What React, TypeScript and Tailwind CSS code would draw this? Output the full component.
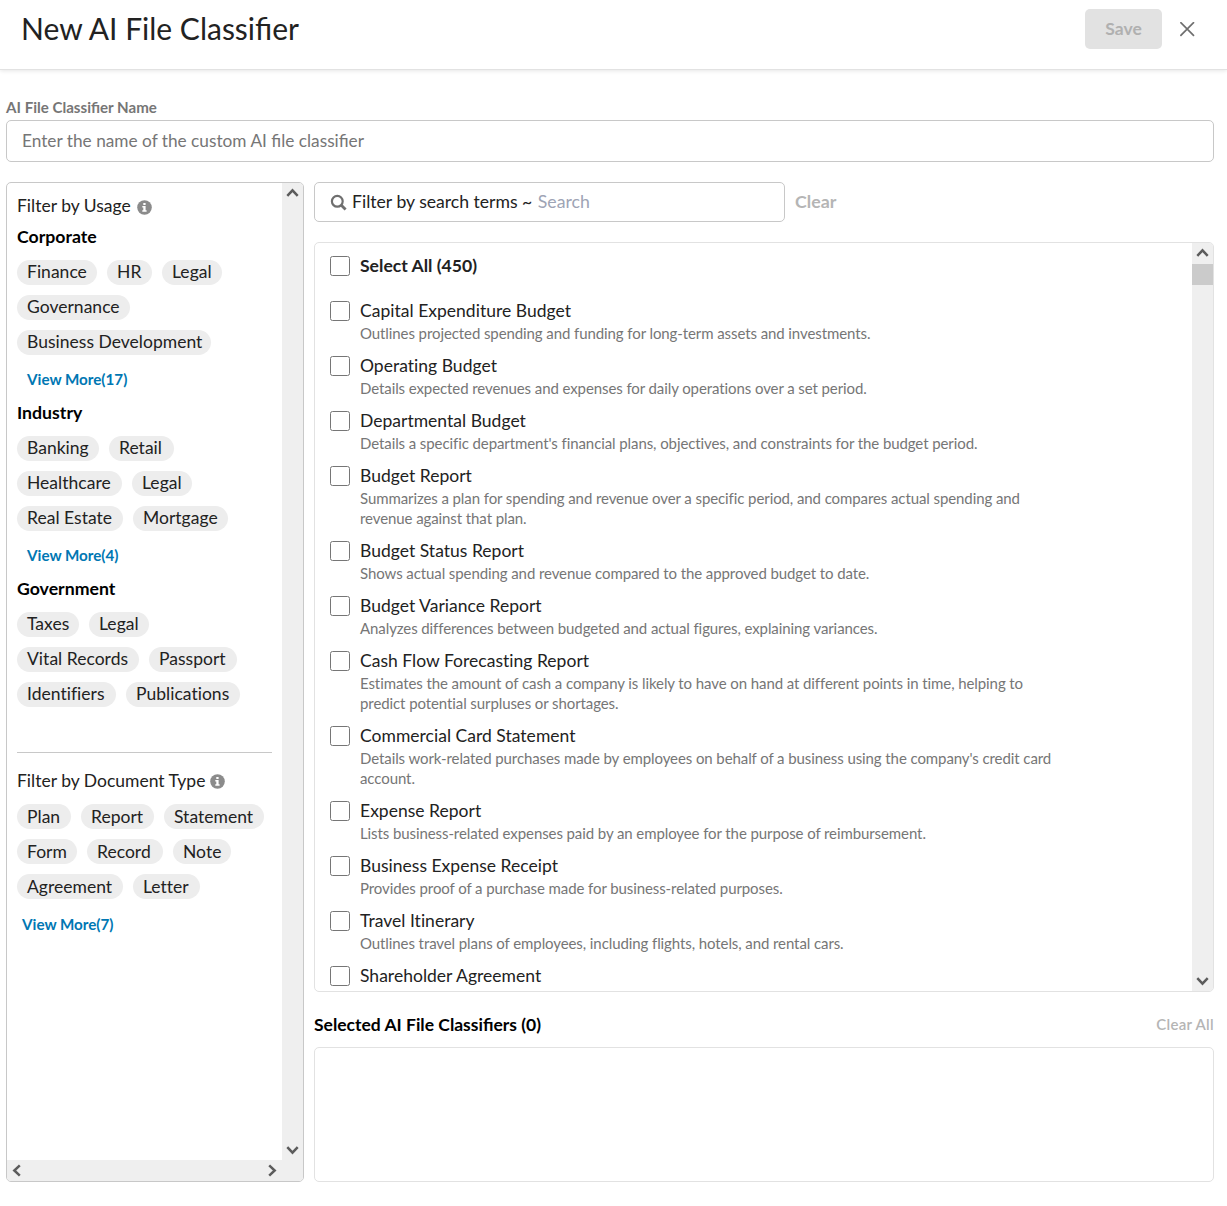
import React, { useState } from 'react';

interface Chip {
  label: string;
  width: number;
}

interface FilterGroup {
  title: string;
  rows: Chip[][];
  more?: string;
}

interface Classifier {
  name: string;
  description: string;
}

const usageGroups: FilterGroup[] = [
  {
    title: 'Corporate',
    rows: [
      [{ label: 'Finance', width: 80 }, { label: 'HR', width: 45 }, { label: 'Legal', width: 60 }],
      [{ label: 'Governance', width: 113 }],
      [{ label: 'Business Development', width: 194 }],
    ],
    more: 'View More(17)',
  },
  {
    title: 'Industry',
    rows: [
      [{ label: 'Banking', width: 82 }, { label: 'Retail', width: 65 }],
      [{ label: 'Healthcare', width: 105 }, { label: 'Legal', width: 60 }],
      [{ label: 'Real Estate', width: 106 }, { label: 'Mortgage', width: 95 }],
    ],
    more: 'View More(4)',
  },
  {
    title: 'Government',
    rows: [
      [{ label: 'Taxes', width: 62 }, { label: 'Legal', width: 60 }],
      [{ label: 'Vital Records', width: 122 }, { label: 'Passport', width: 88 }],
      [{ label: 'Identifiers', width: 99 }, { label: 'Publications', width: 114 }],
    ],
  },
];

const documentTypes: Chip[][] = [
  [{ label: 'Plan', width: 54 }, { label: 'Report', width: 73 }, { label: 'Statement', width: 100 }],
  [{ label: 'Form', width: 60 }, { label: 'Record', width: 76 }, { label: 'Note', width: 58 }],
  [{ label: 'Agreement', width: 106 }, { label: 'Letter', width: 67 }],
];

const classifiers: Classifier[] = [
  { name: 'Capital Expenditure Budget', description: 'Outlines projected spending and funding for long-term assets and investments.' },
  { name: 'Operating Budget', description: 'Details expected revenues and expenses for daily operations over a set period.' },
  { name: 'Departmental Budget', description: "Details a specific department's financial plans, objectives, and constraints for the budget period." },
  { name: 'Budget Report', description: 'Summarizes a plan for spending and revenue over a specific period, and compares actual spending and revenue against that plan.' },
  { name: 'Budget Status Report', description: 'Shows actual spending and revenue compared to the approved budget to date.' },
  { name: 'Budget Variance Report', description: 'Analyzes differences between budgeted and actual figures, explaining variances.' },
  { name: 'Cash Flow Forecasting Report', description: 'Estimates the amount of cash a company is likely to have on hand at different points in time, helping to predict potential surpluses or shortages.' },
  { name: 'Commercial Card Statement', description: "Details work-related purchases made by employees on behalf of a business using the company's credit card account." },
  { name: 'Expense Report', description: 'Lists business-related expenses paid by an employee for the purpose of reimbursement.' },
  { name: 'Business Expense Receipt', description: 'Provides proof of a purchase made for business-related purposes.' },
  { name: 'Travel Itinerary', description: 'Outlines travel plans of employees, including flights, hotels, and rental cars.' },
  { name: 'Shareholder Agreement', description: '' },
];

const InfoIcon = () => (
  <svg className="size-[15px] shrink-0" viewBox="0 0 15 15">
    <circle cx="7.5" cy="7.5" r="7.3" fill="#8b8b8b" />
    <path d="M6.3 2.9h2.3v2H6.3zM5.3 6h3.3v4.3h1v1.5H5.3v-1.5h1V7.5h-1z" fill="#fff" />
  </svg>
);

const arrowPaths = {
  up: 'M5.3 12.8 10.5 7.3 15.7 12.8',
  down: 'M5.3 8.2 10.5 13.7 15.7 8.2',
  left: 'M12.8 5.3 7.3 10.5 12.8 15.7',
  right: 'M8.2 5.3 13.7 10.5 8.2 15.7',
};

const ScrollArrow = ({ direction }: { direction: keyof typeof arrowPaths }) => (
  <svg className="size-[21px] shrink-0" viewBox="0 0 21 21" fill="none">
    <path d={arrowPaths[direction]} stroke="#5c5c5c" strokeWidth="2.5" />
  </svg>
);

const Checkbox = () => (
  <input
    type="checkbox"
    className="size-5 shrink-0 appearance-none rounded-[2.5px] border border-[#767676] bg-white checked:bg-[#0075c9]"
  />
);

const ChipRows = ({ rows }: { rows: Chip[][] }) => (
  <div className="flex flex-col gap-2.5">
    {rows.map((row, i) => (
      <div key={i} className="flex gap-2.5">
        {row.map(chip => (
          <button
            key={chip.label}
            type="button"
            className="flex h-[25px] rounded-full bg-[#ededed] pl-2.5 tracking-[0.02px] whitespace-nowrap text-[#222]"
            style={{ width: chip.width }}
          >
            {chip.label}
          </button>
        ))}
      </div>
    ))}
  </div>
);

const App: React.FC = () => {
  const [name, setName] = useState('');
  const [search, setSearch] = useState('');

  return (
    <div className="h-[1206px] w-[1227px] overflow-hidden bg-white font-['Lato',sans-serif] text-[17.5px] text-[#222]">
      <header className="flex h-[70px] items-start justify-between border-b border-[#e2e2e2] pr-8 pl-[21px] shadow-[0_1px_4px_rgba(0,0,0,0.1)]">
        <h1 className="mt-2 text-[30px] leading-10">New AI File Classifier</h1>
        <div className="mt-[9px] flex items-center gap-[18px]">
          <button type="button" disabled className="h-10 w-[77px] rounded-[5px] bg-[#e2e2e2] font-bold text-[#b0b0b0]">
            Save
          </button>
          <button type="button" aria-label="Close">
            <svg className="size-[15px]" viewBox="0 0 15 15" fill="none">
              <path d="M.4.2 14 13.8M14 .2.4 13.8" stroke="#6f6f6f" strokeWidth="1.7" />
            </svg>
          </button>
        </div>
      </header>

      <main className="pr-[13px] pl-1.5">
        <label htmlFor="name" className="block pt-[26px] pb-px text-[15.1px] leading-[23px] font-bold text-[#767676]">
          AI File Classifier Name
        </label>
        <input
          id="name"
          value={name}
          onChange={e => setName(e.target.value)}
          placeholder="Enter the name of the custom AI file classifier"
          className="block h-[42px] w-full rounded-[5px] border border-[#c8c8c8] px-[15px] pb-0.5 text-[17.25px] placeholder:text-[#767676]"
        />

        <div className="mt-5 flex gap-2.5">
          <aside className="flex h-[1000px] w-[298px] flex-col overflow-hidden rounded-[5px] border border-[#c8c8c8]">
            <div className="flex flex-1">
              <div className="w-[275px] px-2.5">
                <div className="flex h-9 items-center gap-1.5 pt-[11px]">
                  <span>Filter by Usage</span>
                  <span className="pt-0.5">
                    <InfoIcon />
                  </span>
                </div>
                {usageGroups.map(group => (
                  <section key={group.title} className="h-44">
                    <h2 className="mb-[5px] h-9 text-[17.7px] leading-9 font-bold text-black">{group.title}</h2>
                    <div className="leading-6">
                      <ChipRows rows={group.rows} />
                    </div>
                    {group.more && (
                      <a className="mt-[9px] ml-2.5 block text-[15.2px] leading-[30px] font-bold text-[#0077b3]">{group.more}</a>
                    )}
                  </section>
                ))}
                <div className="mt-[5px] border-t border-[#c8c8c8] pt-4">
                  <div className="mb-[11px] flex h-6 items-center gap-[5px]">
                    <span>Filter by Document Type</span>
                    <InfoIcon />
                  </div>
                  <div className="leading-[26px]">
                    <ChipRows rows={documentTypes} />
                  </div>
                  <a className="mt-2.5 ml-[5px] block text-[15.2px] leading-[30px] font-bold text-[#0077b3]">View More(7)</a>
                </div>
              </div>
              <div className="flex w-[21px] flex-col justify-between bg-[#efefef]">
                <ScrollArrow direction="up" />
                <ScrollArrow direction="down" />
              </div>
            </div>
            <div className="flex h-[21px] justify-between bg-[#efefef] pr-[21px]">
              <ScrollArrow direction="left" />
              <ScrollArrow direction="right" />
            </div>
          </aside>

          <section className="w-[900px]">
            <div className="flex h-10 items-center">
              <div className="flex h-10 w-[471px] items-center rounded-[5px] border border-[#c8c8c8] pl-[15px]">
                <svg className="mr-[5px] size-[17px] shrink-0" viewBox="0 0 17 17" fill="none" stroke="#6f6f6f">
                  <circle cx="7.3" cy="7.3" r="5.4" strokeWidth="2.2" />
                  <path d="m11.3 11.3 4.3 4.3" strokeWidth="2.8" />
                </svg>
                <span className="text-[17.6px] whitespace-nowrap">Filter by search terms ~</span>
                <input
                  value={search}
                  onChange={e => setSearch(e.target.value)}
                  placeholder="Search"
                  className="ml-[5.5px] w-[220px] text-[17.7px] placeholder:text-[#9ea4b5]"
                />
              </div>
              <button type="button" disabled className="ml-2.5 pb-px text-[17.8px] font-bold text-[#b5b5b5]">
                Clear
              </button>
            </div>

            <div className="mt-5 flex h-[750px] overflow-hidden rounded-[5px] border border-[#e2e2e2]">
              <div className="flex-1 overflow-hidden pl-[15px]">
                <label className="mt-2.5 flex h-[46px] items-start gap-2.5 pt-[3px] font-bold">
                  <Checkbox />
                  <span className="text-[17.6px] leading-5">Select All (450)</span>
                </label>
                {classifiers.map(item => (
                  <label key={item.name} className="flex gap-2.5 pt-0.5 pb-[11px]">
                    <Checkbox />
                    <div className="-mt-[3px] w-[702px]">
                      <div className="leading-[25px] tracking-[0.02px]">{item.name}</div>
                      <p className="text-[15px] leading-5 tracking-[-0.09px] text-[#767676]">{item.description}</p>
                    </div>
                  </label>
                ))}
              </div>
              <div className="flex w-[21px] flex-col bg-[#efefef]">
                <ScrollArrow direction="up" />
                <div className="h-[21px] bg-[#cbcbcb]" />
                <div className="mt-auto h-[21px]">
                  <ScrollArrow direction="down" />
                </div>
              </div>
            </div>

            <div className="flex h-[55px] items-center justify-between pt-[11px]">
              <h2 className="font-bold text-black">Selected AI File Classifiers (0)</h2>
              <button type="button" disabled className="pb-0.5 text-[15px] font-semibold tracking-[0.3px] text-[#b5b5b5]">
                Clear All
              </button>
            </div>
            <div className="h-[135px] rounded-[5px] border border-[#e2e2e2]" />
          </section>
        </div>
      </main>
    </div>
  );
};

export default App;
